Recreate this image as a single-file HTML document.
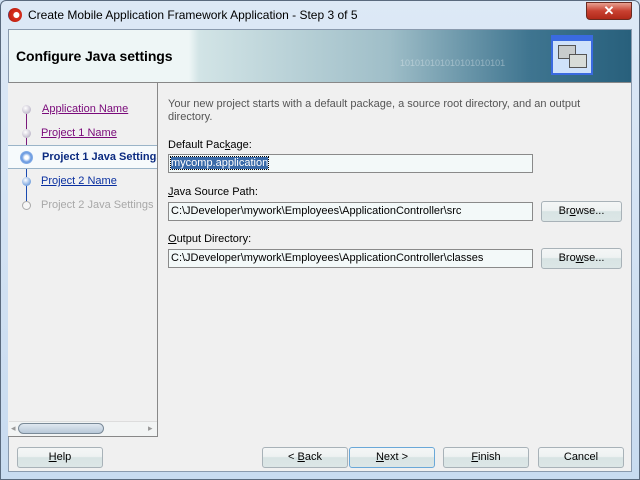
<!DOCTYPE html>
<html><head><style>
*{margin:0;padding:0;box-sizing:border-box}
body{width:640px;height:480px;overflow:hidden;font-family:"Liberation Sans",Tahoma,sans-serif;font-size:11px;background:#cfe0f2;position:relative}
.abs{position:absolute}
.frame{left:0;top:0;width:640px;height:480px;background:linear-gradient(#dde9f6,#c8dbf0);border:1px solid #5a6a7e;border-radius:6px 6px 0 0}
.title{left:28px;top:8px;font-size:12px;color:#000;font-family:"Liberation Sans",sans-serif}
.client{left:8px;top:29px;width:624px;height:443px;background:#f0f0f0;border:1px solid #8a9aae}
.hdr{left:9px;top:30px;width:622px;height:53px;background:linear-gradient(90deg,#eef6f6 0,#eef6f6 180px,#d2e4e6 190px,#9fbec8 380px,#3f7590 520px,#28607c 622px);border-bottom:1px solid #888}
.hdrt{left:16px;top:48px;font-size:14px;font-weight:bold;color:#000;letter-spacing:-0.1px}
.left{left:8px;top:83px;width:150px;height:354px;background:#f0f0f0;border-right:1px solid #888;border-bottom:1px solid #888}
.field{left:168px;width:365px;height:19px;background:#f3f9f9;border:1px solid #8a8a8a;padding:1px 2px;font-size:11px;line-height:15px}
.lbl{left:168px;font-size:11px}
.btn{height:21px;border:1px solid #a8b2b8;border-radius:3px;background:linear-gradient(#f4f6f6 0,#eef2f2 45%,#d8e4e4 50%,#dce6e6 100%);text-align:center;line-height:19px;font-size:11px}
a{color:#7a0a7a;text-decoration:underline}
.dot{width:9px;height:9px;border-radius:50%;background:radial-gradient(circle at 40% 35%,#fff,#a8a0b8)}
</style></head><body>
<div class="abs frame"></div>
<div class="abs" style="left:8px;top:8px;width:14px;height:14px;border-radius:50%;background:radial-gradient(circle at 60% 50%,#fff 25%,#d83020 30%,#c02010 70%,#2050a0 75%)"></div>
<div class="abs title">Create Mobile Application Framework Application - Step 3 of 5</div>
<div class="abs" style="left:586px;top:2px;width:46px;height:18px;border-radius:0 0 4px 4px;border:1px solid #6a2a20;background:linear-gradient(#e8a090,#c84030 50%,#b02818);color:#fff;text-align:center;font-weight:bold;font-size:13px;line-height:16px">✕</div>
<div class="abs client"></div>
<div class="abs hdr"></div>
<div class="abs" style="left:400px;top:58px;color:rgba(255,255,255,.35);font-size:9px">101010101010101010101</div>
<div class="abs hdrt">Configure Java settings</div>
<div class="abs" style="left:551px;top:35px;width:42px;height:40px;background:#cfe2fa;border:2px solid #3a6ae0">
 <div style="height:4px;background:#3a6ae0"></div>
 <div class="abs" style="left:5px;top:8px;width:18px;height:14px;background:#c8cccc;border:1px solid #555"></div>
 <div class="abs" style="left:16px;top:17px;width:18px;height:14px;background:#d8dcd8;border:1px solid #555"></div>
</div>
<div class="abs left"></div>
<div class="abs" style="left:26px;top:107px;width:1px;height:46px;background:#7a1a7a"></div>
<div class="abs" style="left:26px;top:153px;width:1px;height:50px;background:#1a4ab0"></div>
<div class="abs dot" style="left:22px;top:105px"></div>
<div class="abs dot" style="left:22px;top:129px"></div>
<div class="abs" style="left:8px;top:145px;width:149px;height:24px;background:#f6fafc;border-top:1px solid #9ab4c8;border-bottom:1px solid #9ab4c8"></div>
<div class="abs" style="left:20px;top:151px;width:13px;height:13px;border-radius:50%;background:radial-gradient(#fff 20%,#6a9ae0 50%,#aac8f0)"></div>
<div class="abs dot" style="left:22px;top:177px;background:radial-gradient(circle at 40% 35%,#fff,#3a7ad0)"></div>
<div class="abs" style="left:22px;top:201px;width:9px;height:9px;border-radius:50%;border:1px solid #aaa;background:#f6f6f6"></div>
<div class="abs" style="left:42px;top:103px"><a>Application Name</a></div>
<div class="abs" style="left:41px;top:127px"><a>Project 1 Name</a></div>
<div class="abs" style="left:42px;top:151px;font-weight:bold;color:#0a2a80;width:115px;overflow:hidden;white-space:nowrap">Project 1 Java Settings</div>
<div class="abs" style="left:41px;top:175px"><a style="color:#0a30a0">Project 2 Name</a></div>
<div class="abs" style="left:41px;top:199px;color:#a8a8a8">Project 2 Java Settings</div>
<div class="abs" style="left:9px;top:421px;width:148px;height:15px;background:#f2f4f4;border-top:1px solid #ddd"></div>
<div class="abs" style="left:18px;top:423px;width:86px;height:11px;border-radius:6px;border:1px solid #7a8a98;background:linear-gradient(#e0e8f0,#b8c8d8)"></div>
<div class="abs" style="left:11px;top:423px;color:#999;font-size:9px">◂</div>
<div class="abs" style="left:148px;top:423px;color:#999;font-size:9px">▸</div>
<div class="abs" style="left:168px;top:98px;color:#555;width:455px;line-height:13px">Your new project starts with a default package, a source root directory, and an output directory.</div>
<div class="abs lbl" style="top:139px">Default Pac<u>k</u>age:</div>
<div class="abs field" style="top:154px"><span style="background:#3a6aa8;color:#fff;outline:1px dotted #000">mycomp.application</span></div>
<div class="abs lbl" style="top:186px"><u>J</u>ava Source Path:</div>
<div class="abs field" style="top:202px">C:\JDeveloper\mywork\Employees\ApplicationController\src</div>
<div class="abs btn" style="left:541px;top:201px;width:81px">Br<u>o</u>wse...</div>
<div class="abs lbl" style="top:233px"><u>O</u>utput Directory:</div>
<div class="abs field" style="top:249px">C:\JDeveloper\mywork\Employees\ApplicationController\classes</div>
<div class="abs btn" style="left:541px;top:248px;width:81px">Bro<u>w</u>se...</div>
<div class="abs btn" style="left:17px;top:447px;width:86px"><u>H</u>elp</div>
<div class="abs btn" style="left:262px;top:447px;width:86px">&lt; <u>B</u>ack</div>
<div class="abs btn" style="left:349px;top:447px;width:86px;border-color:#6aa8d8"><u>N</u>ext &gt;</div>
<div class="abs btn" style="left:443px;top:447px;width:86px"><u>F</u>inish</div>
<div class="abs btn" style="left:538px;top:447px;width:86px">Cancel</div>
</body></html>
